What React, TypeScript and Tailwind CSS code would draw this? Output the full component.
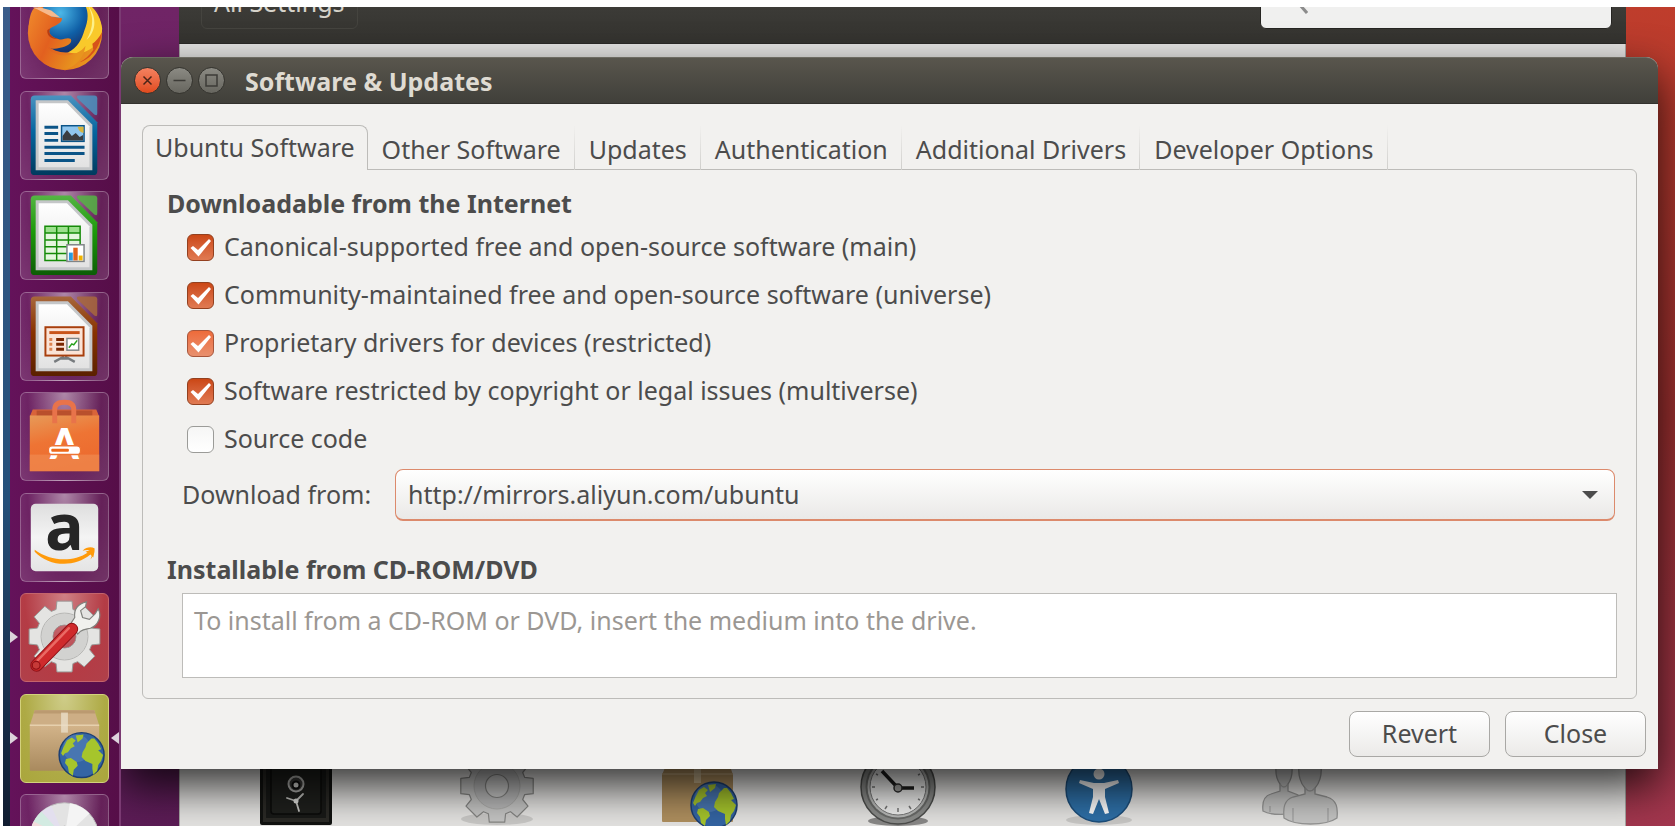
import { useState } from "react";
import type { ReactNode } from "react";

const tabs = [
  "Ubuntu Software",
  "Other Software",
  "Updates",
  "Authentication",
  "Additional Drivers",
  "Developer Options",
];

const sources = [
  { id: "main", label: "Canonical-supported free and open-source software (main)", state: "on" },
  { id: "universe", label: "Community-maintained free and open-source software (universe)", state: "on" },
  { id: "restricted", label: "Proprietary drivers for devices (restricted)", state: "mixed" },
  { id: "multiverse", label: "Software restricted by copyright or legal issues (multiverse)", state: "on" },
  { id: "source", label: "Source code", state: "off" },
];

function gearPath(cx: number, cy: number, outer: number, inner: number) {
  const points: string[] = [];
  for (let i = 0; i < 8; i++) {
    const a = (i * Math.PI) / 4;
    const corners = [
      [inner, -0.3],
      [outer, -0.21],
      [outer, 0.21],
      [inner, 0.3],
    ];
    corners.forEach(([r, d]) => {
      points.push(`${(cx + r * Math.cos(a + d)).toFixed(1)} ${(cy + r * Math.sin(a + d)).toFixed(1)}`);
    });
  }
  return `M${points.join("L")}Z`;
}

function Globe({ cx, cy }: { cx: number; cy: number }) {
  return (
    <g transform={`translate(${cx - 24} ${cy - 24})`}>
      <circle cx="24" cy="24" r="23" fill="#3465a4" stroke="#1c3f73" strokeWidth="1.5" />
      <circle cx="19" cy="17" r="14" fill="#6f97cb" opacity=".35" />
      <path
        d="M5 17L9 9L14 6L18 9L15 12L17 15L13 17L10 21L7 22L5 25L3 22ZM8 28L13 27L19 31L20 35L16 39L15 45L11 42L10 36L7 32ZM18 4L26 3L25 7L20 11ZM25 21L28 16L29 12L34 7L37 7L41 12L44 18L41 19L46 24L44 30L41 34L40 40L36 44L35 38L35 33L28 30L24 26Z"
        fill="#a6c52c"
      />
    </g>
  );
}

function FirefoxIcon() {
  return (
    <svg viewBox="0 0 89 89" className="h-full w-full" aria-hidden="true">
      <defs>
        <linearGradient id="fox" x1="0" y1="0" x2="1" y2="0.5">
          <stop offset="0" stopColor="#f08a2c" />
          <stop offset=".5" stopColor="#e2601f" />
          <stop offset="1" stopColor="#e8941e" />
        </linearGradient>
        <radialGradient id="foxGlobe" cx=".4" cy=".3" r=".7">
          <stop offset="0" stopColor="#4cb8e8" />
          <stop offset=".6" stopColor="#0f5fa6" />
          <stop offset="1" stopColor="#17306b" />
        </radialGradient>
      </defs>
      <circle cx="45" cy="43" r="38" fill="url(#fox)" />
      <circle cx="46" cy="34" r="29" fill="url(#foxGlobe)" />
      <path d="M63 10C70 20 69 30 65 40C62 50 58 58 48 63C68 67 83 54 83 38C81 24 74 15 63 10Z" fill="#f9c92b" />
      <path d="M68 14C75 26 74 38 67 50C76 42 79 28 68 14Z" fill="#fdf08a" />
      <path
        d="M8 34C9 25 11 20 14 17C22 17 26 20 31 26L42 28C42 33 36 35 30 38C27 43 31 47 38 49C43 51 46 47 51 49C53 53 47 57 40 58C34 60 30 59 27 57C34 70 58 68 66 56C64 72 50 81 42 80C22 79 6 62 8 34Z"
        fill="url(#fox)"
      />
      <path d="M12 17L17 19L31 26L40 27L31 20L20 17Z" fill="#f6b98c" />
      <path d="M30 38C27 43 31 47 38 49C32 50 26 46 27 40Z" fill="#b63d14" />
      <path d="M83 42C80 48 76 52 73 54L74 60C70 66 65 70 60 73C71 70 81 58 83 42Z" fill="#d6521a" />
    </svg>
  );
}

function OfficeDoc({ id, dark, mid, light, children }: { id: string; dark: string; mid: string; light: string; children: ReactNode }) {
  return (
    <svg viewBox="0 0 89 89" className="h-full w-full" aria-hidden="true">
      <defs>
        <linearGradient id={`${id}Edge`} x1="0" y1="0" x2="0" y2="1">
          <stop offset="0" stopColor={light} />
          <stop offset=".45" stopColor={mid} />
          <stop offset="1" stopColor={dark} />
        </linearGradient>
        <linearGradient id={`${id}Paper`} x1="0" y1="0" x2="0" y2="1">
          <stop offset="0" stopColor="#ffffff" />
          <stop offset="1" stopColor="#e2e2e2" />
        </linearGradient>
      </defs>
      <path d="M14 3.500H51L78 31V81Q78 85 74 85H14Q10 85 10 81V7.500Q10 3.500 14 3.500Z" fill={`url(#${id}Edge)`} />
      <path d="M59 3.500H75Q78 3.500 78 6.500V22Q78 25 75 23L58 7Q56 3.500 59 3.500Z" fill={light} opacity=".85" />
      <path d="M15 8.500H48L73 33.500V80H15Z" fill="#c4c6c8" />
      <path d="M18 11.500H47L70 35V77H18Z" fill={`url(#${id}Paper)`} />
      {children}
    </svg>
  );
}

function WriterIcon() {
  return (
    <OfficeDoc id="writer" dark="#003a5e" mid="#0566a0" light="#4b93c0">
      <path d="M24 36H38M24 42.500H38M24 49.500H38M24 56.500H65M24 63H65M24 70H55" stroke="#0b5487" strokeWidth="3" />
      <rect x="41.500" y="34.500" width="23" height="16" fill="#8fc6ee" stroke="#0b5487" strokeWidth="1.500" />
      <path d="M58 35.500H64V42Q59 41 58 35.500Z" fill="#d8b53c" />
      <path d="M42.500 49.500V45L47 39L52 45L56 42L60 46L63.500 44V49.500Z" fill="#3a3d40" />
    </OfficeDoc>
  );
}

function CalcIcon() {
  return (
    <OfficeDoc id="calc" dark="#0c5c06" mid="#1c9a0a" light="#55b544">
      <rect x="24.500" y="35" width="36" height="35" fill="#e4f6de" />
      <rect x="24.500" y="35" width="36" height="7" fill="#9be08c" />
      <path d="M24.500 35H60.500V70H24.500ZM24.500 42H60.500M24.500 49H60.500M24.500 56H60.500M24.500 63H60.500M36.500 35V70M48.500 35V70" fill="none" stroke="#158a08" strokeWidth="1.500" />
      <rect x="47" y="54" width="17.500" height="17" fill="#fff" stroke="#7f8487" strokeWidth="1.500" />
      <path d="M49 70V62H53V70Z" fill="#2a9bdc" />
      <path d="M53.500 70V57H58V70Z" fill="#e0631c" />
      <path d="M59 70V65H63V70Z" fill="#f0b400" />
    </OfficeDoc>
  );
}

function ImpressIcon() {
  return (
    <OfficeDoc id="impress" dark="#5a2000" mid="#883200" light="#a8683c">
      <path d="M44 65L34 70.500M45 65L55 70.500M41 67H48" stroke="#777b7e" strokeWidth="2.500" />
      <rect x="25" y="35" width="39" height="29" fill="#fbe3d6" stroke="#a83e0c" strokeWidth="2" />
      <path d="M29 40.500H60" stroke="#c9541a" strokeWidth="3" />
      <path d="M29 47.500H32M29 52.500H32M29 57.500H32" stroke="#dd8350" strokeWidth="3" />
      <path d="M36 47.500H44M36 52.500H44M36 57.500H44" stroke="#7a2600" strokeWidth="3" />
      <rect x="47" y="46.500" width="12" height="12" fill="#fff" stroke="#7f8487" strokeWidth="1.500" />
      <path d="M49 56L52 52L54 53L57.500 48.500" fill="none" stroke="#26a01b" strokeWidth="1.500" />
    </OfficeDoc>
  );
}

function SoftwareIcon() {
  return (
    <svg viewBox="0 0 89 89" className="h-full w-full" aria-hidden="true">
      <defs>
        <linearGradient id="bag" x1="0" y1="0" x2=".3" y2="1">
          <stop offset="0" stopColor="#e79a58" />
          <stop offset=".5" stopColor="#ee7434" />
          <stop offset="1" stopColor="#ec6a2e" />
        </linearGradient>
      </defs>
      <path d="M12 17H77L80 24H9Z" fill="#d9643a" />
      <path d="M16 18H73V24H16Z" fill="#b9502c" />
      <rect x="9" y="23" width="71" height="57" fill="url(#bag)" />
      <rect x="9" y="63" width="71" height="17" fill="#f08a50" opacity=".7" />
      <path d="M34.500 31V17Q34.500 9.500 44.500 9.500Q54 9.500 54 17V31" fill="none" stroke="#e8734a" strokeWidth="5" />
      <text x="44.500" y="68" textAnchor="middle" fontSize="42" fontWeight="900" fontFamily="Lato, sans-serif" fill="#fff">
        A
      </text>
      <rect x="28" y="54" width="33" height="9" rx="4" fill="#fff" stroke="#ee7434" strokeWidth="1.500" />
      <rect x="31" y="57" width="18" height="3" rx="1" fill="#ee6a1a" />
    </svg>
  );
}

function AmazonIcon() {
  return (
    <svg viewBox="0 0 89 89" className="h-full w-full overflow-visible" aria-hidden="true">
      <defs>
        <linearGradient id="amazonCard" x1="0" y1="0" x2="0" y2="1">
          <stop offset="0" stopColor="#dedede" />
          <stop offset=".5" stopColor="#f4f4f4" />
          <stop offset="1" stopColor="#e4e4e4" />
        </linearGradient>
      </defs>
      <rect x="10" y="10" width="69" height="69" rx="5" fill="url(#amazonCard)" />
      <text x="44.500" y="57" textAnchor="middle" fontSize="66" fontWeight="700" fontFamily="Open Sans, sans-serif" fill="#262626">
        a
      </text>
      <path d="M14 57C30 69 53 70 68 60L66 59L75 55.500L74 65L71 62C54 76 28 74 14 59Z" fill="#ff9a0a" />
      <path d="M63 58C67 54 72 54 75 55.500C76 60 74 64 71 67C73 63 73 60 72 58.500C70 57 67 57 63 58Z" fill="#ff9a0a" />
    </svg>
  );
}

function SettingsIcon() {
  return (
    <svg viewBox="0 0 89 89" className="h-full w-full" aria-hidden="true">
      <path
        d={`${gearPath(44.5, 43.5, 37, 29)}M44.500 31.500A12 12 0 1 0 44.500 55.500A12 12 0 1 0 44.500 31.500Z`}
        fill="#e4e4e2"
        stroke="#9a9a98"
        strokeWidth="1"
        strokeLinejoin="round"
        fillRule="evenodd"
      />
      <circle cx="44.500" cy="43.500" r="18" fill="none" stroke="#d2d2d0" strokeWidth="11" />
      <circle cx="44.500" cy="43.500" r="24" fill="none" stroke="#b4b4b2" strokeWidth="1" />
      <path d="M51 30L55 24C54 16 58 10 67 8L66 13L61 17L63 24L70 26L76 20L79 15C83 23 79 32 71 35C67 36 64 36 61 38L58 41Z" fill="#f1f1ee" stroke="#81827e" strokeWidth="1.200" />
      <path d="M16 73L52 36" stroke="#8f1116" strokeWidth="13" strokeLinecap="round" />
      <path d="M16 73L52 36" stroke="#cf2a2c" strokeWidth="11" strokeLinecap="round" />
      <path d="M17 68L49 35" stroke="#ea6a64" strokeWidth="2.500" strokeLinecap="round" />
      <circle cx="15.500" cy="73" r="4" fill="#c63a38" stroke="#8f1116" strokeWidth="1.200" />
    </svg>
  );
}

function PackageIcon() {
  return (
    <svg viewBox="0 0 89 89" className="h-full w-full" aria-hidden="true">
      <defs>
        <linearGradient id="box" x1="0" y1="0" x2="0" y2="1">
          <stop offset="0" stopColor="#d3b48a" />
          <stop offset="1" stopColor="#a98a5e" />
        </linearGradient>
      </defs>
      <path d="M14 15.500H75L80 31H9Z" fill="#cdae85" />
      <path d="M14 15.500H75L76 19H13Z" fill="#bb9a70" />
      <rect x="9" y="30.500" width="71" height="47" rx="1" fill="url(#box)" />
      <path d="M9 31H80" stroke="#e6d0ad" strokeWidth="1.500" />
      <path d="M41 18H48V38.500H41Z" fill="#ebe0cc" opacity=".75" />
      <Globe cx={62} cy={61.5} />
    </svg>
  );
}

function DiscIcon() {
  return (
    <svg viewBox="0 0 89 89" className="h-full w-full" aria-hidden="true">
      <circle cx="44.500" cy="43" r="35" fill="#e3e3e3" stroke="#bdbdbd" />
      <path d="M44.500 43L11 32A35 35 0 0 1 21 17Z" fill="#d3ebe2" />
      <path d="M44.500 43L9.500 40A35 35 0 0 1 13 27Z" fill="#f2dcdc" />
      <path d="M44.500 43L21 17A35 35 0 0 1 31 11Z" fill="#e3dfee" />
      <path d="M44.500 43L50 8.500A35 35 0 0 1 70 19Z" fill="#f4f4f4" />
      <circle cx="44.500" cy="43" r="11" fill="#d0d0d0" stroke="#9d9d9d" />
      <circle cx="44.500" cy="43" r="5" fill="#8a8a8a" />
    </svg>
  );
}

const glassTile =
  "bg-[radial-gradient(ellipse_at_50%_0%,rgba(255,255,255,0.5),rgba(255,255,255,0.08)_60%,rgba(255,255,255,0.16))] border-white/25";

const launcher = [
  { name: "Firefox Web Browser", icon: <FirefoxIcon />, tile: glassTile },
  { name: "LibreOffice Writer", icon: <WriterIcon />, tile: glassTile },
  { name: "LibreOffice Calc", icon: <CalcIcon />, tile: glassTile },
  { name: "LibreOffice Impress", icon: <ImpressIcon />, tile: glassTile },
  { name: "Ubuntu Software", icon: <SoftwareIcon />, tile: glassTile },
  { name: "Amazon", icon: <AmazonIcon />, tile: glassTile },
  {
    name: "System Settings",
    icon: <SettingsIcon />,
    tile: "bg-[radial-gradient(ellipse_at_50%_0%,#cf8085,#b43c45_65%,#b0404a)] border-[#c4646b]",
    running: true,
  },
  {
    name: "Software & Updates",
    icon: <PackageIcon />,
    tile: "bg-[radial-gradient(ellipse_at_50%_0%,#cfcd8a,#aeaa45_65%,#aaa63c)] border-[#d3d17c]",
    running: true,
    focused: true,
  },
  { name: "Disc", icon: <DiscIcon />, tile: glassTile },
];

function Launcher() {
  return (
    <nav aria-label="Launcher" className="relative z-20 w-[111px] shrink-0 overflow-hidden border-r-2 border-[#7a3a72] bg-linear-to-r from-[#64125a] to-[#560e48]">
      <div className="-mt-[17px] flex h-[893px] flex-col items-center justify-between">
        {launcher.map((app) => (
          <div key={app.name} className="relative flex w-full shrink-0 justify-center">
            {app.running && (
              <svg viewBox="0 0 8 12" className="absolute top-[38px] left-0 h-3 w-2" aria-hidden="true">
                <path d="M0 0L8 6L0 12Z" fill="#ddd3dc" />
              </svg>
            )}
            <button aria-label={app.name} className={`h-[89px] w-[89px] rounded-md border ${app.tile}`}>
              {app.icon}
            </button>
            {app.focused && (
              <svg viewBox="0 0 8 12" className="absolute top-[38px] right-0 h-3 w-2" aria-hidden="true">
                <path d="M8 0L0 6L8 12Z" fill="#ddd3dc" />
              </svg>
            )}
          </div>
        ))}
      </div>
    </nav>
  );
}

function SafeIcon() {
  return (
    <svg viewBox="0 0 80 80" className="h-20 w-20" aria-hidden="true">
      <rect x="4" y="4" width="72" height="75" rx="2" fill="#111210" />
      <rect x="7" y="7" width="66" height="69" fill="#2b2a26" />
      <rect x="10" y="8" width="60" height="64" fill="#181917" />
      <rect x="15" y="10" width="50" height="58" rx="3" fill="#1f201d" stroke="#0b0b0a" strokeWidth="1.500" />
      <circle cx="40" cy="38" r="7.500" fill="#3a3a38" stroke="#b4b4b1" strokeWidth="2" />
      <circle cx="40" cy="39" r="3.500" fill="#d7d7d4" stroke="#0c0c0c" strokeWidth="2" />
      <path d="M40 55L31 52M40 55L47 48M40 55L43 65" stroke="#c6c6c2" strokeWidth="1.800" strokeLinecap="round" />
      <circle cx="40" cy="55" r="2.500" fill="#e0e0dc" />
    </svg>
  );
}

function GearIcon() {
  return (
    <svg viewBox="0 0 80 80" className="h-20 w-20" aria-hidden="true">
      <ellipse cx="40" cy="73" rx="36" ry="6" fill="#000" opacity=".12" />
      <path d={gearPath(40, 40, 37, 29)} fill="#c6c6c5" stroke="#858583" strokeWidth="1.200" strokeLinejoin="round" />
      <circle cx="40" cy="40" r="23" fill="#bababa" stroke="#acacaa" />
      <circle cx="40" cy="40" r="11.500" fill="#cbcbca" stroke="#858583" strokeWidth="1.200" />
    </svg>
  );
}

function BoxIcon() {
  return (
    <svg viewBox="0 0 80 80" className="h-20 w-20" aria-hidden="true">
      <path d="M10 14H70L75 29H4Z" fill="#b39362" />
      <rect x="4" y="28" width="71" height="48" rx="1" fill="#b0905f" />
      <path d="M4 28H75" stroke="#cdb084" strokeWidth="1.500" />
      <path d="M36 16H43V37H36Z" fill="#ddcba8" opacity=".7" />
      <Globe cx={56} cy={59} />
    </svg>
  );
}

function ClockIcon() {
  return (
    <svg viewBox="0 0 80 80" className="h-20 w-20" aria-hidden="true">
      <ellipse cx="40" cy="75" rx="30" ry="5" fill="#000" opacity=".4" />
      <circle cx="40" cy="41" r="37" fill="#8c8d8b" stroke="#4d4e4c" strokeWidth="1.500" />
      <circle cx="40" cy="41" r="32.500" fill="#6a6b69" />
      <circle cx="40" cy="41" r="30.500" fill="#b9bab8" />
      <circle cx="40" cy="41" r="28" fill="#f0f0ef" stroke="#777" />
      <path d="M40 66V62M14 41H17M63 41H66M27 63L29 60M53 63L51 60M18 54L20 53M62 54L60 53M18 28L20 29M62 28L60 29" stroke="#777" strokeWidth="1.500" />
      <path d="M40 42L24 25M40 42L56 42" stroke="#1d1d1d" strokeWidth="3.500" />
      <circle cx="40" cy="42" r="4" fill="#a5a5a3" stroke="#2d2d2d" strokeWidth="1.500" />
    </svg>
  );
}

function AccessIcon() {
  return (
    <svg viewBox="0 0 80 80" className="h-20 w-20" aria-hidden="true">
      <ellipse cx="40" cy="74" rx="33" ry="5" fill="#000" opacity=".12" />
      <circle cx="40" cy="43" r="33" fill="#2e70a8" stroke="#1d4f7c" strokeWidth="1.500" />
      <circle cx="40" cy="28" r="5.500" fill="#fff" />
      <path d="M21 34L35 37H45L59 34L60 37L46 43L46 51L50 67L46 68L40 53L34 68L30 67L34 51L34 43L20 37Z" fill="#fff" />
    </svg>
  );
}

function UsersIcon() {
  return (
    <svg viewBox="0 0 80 80" className="h-20 w-20" aria-hidden="true">
      <g fill="#c6c6c5" stroke="#969695" strokeWidth="1.300">
        <path d="M3 65C2 57 4 50 11 48L20 45V38C14 30 14 10 24 10C34 10 34 30 28 38V45L38 49V67C24 69 10 69 3 65Z" />
        <path d="M24 72C23 62 24 54 33 51L45 48V42C36 33 36 8 50 8C64 8 64 33 55 42V48L67 51C77 54 78 62 77 72C66 80 35 80 24 72Z" />
      </g>
      <path d="M20 38Q24 44 28 38M45 42Q50 48 55 42M33 62V76M68 62V76M10 60V66" fill="none" stroke="#a3a3a2" strokeWidth="1.300" />
    </svg>
  );
}

const settingsItems = [
  { name: "Security & Privacy", icon: <SafeIcon /> },
  { name: "Details", icon: <GearIcon /> },
  { name: "Software & Updates", icon: <BoxIcon /> },
  { name: "Time & Date", icon: <ClockIcon /> },
  { name: "Universal Access", icon: <AccessIcon /> },
  { name: "User Accounts", icon: <UsersIcon /> },
];

function SettingsWindow() {
  return (
    <section aria-label="System Settings" className="absolute inset-y-0 right-[49px] left-[58px] flex flex-col bg-[#e6e5e3]">
      <header className="flex h-[37px] shrink-0 items-end justify-between overflow-hidden border-b border-[#2b2a27] bg-linear-to-b from-[#3c3b37] to-[#34332f] pr-[14px] pb-[14px] pl-[22px]">
        <button className="h-[54px] shrink-0 rounded-md border border-[#45443f] px-3 text-[25px] leading-[46px] text-[#d6d3ca]">
          All Settings
        </button>
        <div className="relative">
          <input aria-label="Search" type="search" className="block h-11 w-[352px] rounded-md border border-[#262522] bg-[#f0f0ef] px-10" />
          <svg viewBox="0 0 24 24" className="absolute top-1.5 left-6 h-6 w-6" aria-hidden="true">
            <circle cx="10" cy="7" r="7" fill="none" stroke="#8b8b8b" strokeWidth="2" />
            <path d="M16 14L23 22" stroke="#8b8b8b" strokeWidth="3" />
          </svg>
        </div>
      </header>
      <div className="flex flex-1 flex-col justify-end border-x border-[#a9a8a5]">
        <div className="grid grid-cols-7 pr-6 pl-4">
          {settingsItems.map((item) => (
            <button key={item.name} aria-label={item.name} className="flex justify-center">
              {item.icon}
            </button>
          ))}
        </div>
      </div>
    </section>
  );
}

function TitleBar() {
  return (
    <header className="flex h-[47px] items-center rounded-t-xl border-t border-b border-t-[#6d6b62] border-b-[#33322e] bg-linear-to-b from-[#59564d] to-[#403f3a] px-[13px]">
      <div className="flex gap-[5px]">
        <button aria-label="Close window" className="h-[27px] w-[27px] rounded-full border border-[#35342f] bg-linear-to-b from-[#f4815f] to-[#e04a1c]">
          <svg viewBox="0 0 25 25" aria-hidden="true">
            <path d="M8.500 8.500L16.500 16.500M16.500 8.500L8.500 16.500" stroke="#4a2418" strokeWidth="1.500" />
          </svg>
        </button>
        <button aria-label="Minimize window" className="h-[27px] w-[27px] rounded-full border border-[#35342f] bg-linear-to-b from-[#8b8a83] to-[#67665f]">
          <svg viewBox="0 0 25 25" aria-hidden="true">
            <path d="M6.500 12.500H18.500" stroke="#3c3b37" strokeWidth="1.500" />
          </svg>
        </button>
        <button aria-label="Maximize window" className="h-[27px] w-[27px] rounded-full border border-[#35342f] bg-linear-to-b from-[#8b8a83] to-[#67665f]">
          <svg viewBox="0 0 25 25" aria-hidden="true">
            <rect x="7" y="7" width="11" height="11" fill="none" stroke="#3c3b37" strokeWidth="1.500" />
          </svg>
        </button>
      </div>
      <h1 className="ml-5 text-[25px] leading-8 font-bold text-[#dfdbd2]">Software &amp; Updates</h1>
    </header>
  );
}

function SourceRow({ id, label, state }: { id: string; label: string; state: string }) {
  const [checked, setChecked] = useState(state !== "off");
  const fill =
    state === "mixed"
      ? "checked:border-[#a8553a] checked:from-[#ee6b3a] checked:to-[#e8906e]"
      : "checked:border-[#93401f] checked:from-[#cb4714] checked:to-[#e07a52]";
  return (
    <div className="flex h-12 items-center">
      <span className="relative h-[27px] w-[27px]">
        <input
          id={id}
          type="checkbox"
          checked={checked}
          onChange={() => setChecked(!checked)}
          className={`peer block h-[27px] w-[27px] appearance-none rounded-md border border-[#9b9b98] bg-linear-to-b from-[#f6f6f5] to-white ${fill}`}
        />
        <svg viewBox="0 0 27 27" className="pointer-events-none absolute inset-0 hidden h-full w-full peer-checked:block" aria-hidden="true">
          <path d="M3.500 14L6 12L11 16L22 5L24 7L11.500 22.500Z" fill="#fff" />
        </svg>
      </span>
      <label htmlFor={id} className="pl-2.5">
        {label}
      </label>
    </div>
  );
}

export default function App() {
  const [tab, setTab] = useState(tabs[0]);

  return (
    <div className="h-screen bg-white px-[3px] pt-[7px] pb-[6px] font-['Noto_Sans',sans-serif] text-[25px] text-[#4c4c4c]">
      <div className="flex h-full overflow-hidden">
        <div className="w-[7px] shrink-0 bg-linear-to-b from-[#3a5c8a] via-[#24507a] via-60% to-[#101c30]" />
        <Launcher />
        <main className="relative min-w-0 flex-1 bg-linear-to-b from-[#702466] to-[#5c1c56]">
          <div className="absolute inset-y-0 right-0 w-[49px] bg-linear-to-b from-[#bf3d2c] via-[#9e3030] via-50% to-[#a2364e]" />
          <SettingsWindow />
          <div className="relative mt-[50px] mr-[17px] rounded-t-xl bg-[#f2f1ef] shadow-[0_18px_45px_rgba(0,0,0,0.8)]">
            <TitleBar />
            <div className="pt-[21px] pr-[21px] pl-[21px]">
              <div role="tablist" className="flex h-[45px] items-stretch">
                {tabs.map((name) => (
                  <button
                    key={name}
                    role="tab"
                    aria-selected={tab === name}
                    onClick={() => setTab(name)}
                    className={
                      tab === name
                        ? "relative z-10 rounded-t-lg border border-b-0 border-[#bdbcb9] bg-[#f2f1ef] px-3 whitespace-nowrap"
                        : "bg-[linear-gradient(to_bottom,transparent,#cfcecb)] bg-[length:1px_100%] bg-right bg-no-repeat px-3.5 pt-1 whitespace-nowrap"
                    }
                  >
                    {name}
                  </button>
                ))}
              </div>
              <div role="tabpanel" aria-label={tab} className="-mt-px rounded-md rounded-tl-none border border-[#bdbcb9] pr-[21px] pb-5 pl-6">
                <h2 className="pt-[17px] leading-8 font-bold">Downloadable from the Internet</h2>
                <div className="mt-1 pl-5">
                  {sources.map((source) => (
                    <SourceRow key={source.id} {...source} />
                  ))}
                </div>
                <div className="mt-1.5 flex items-center pl-[15px]">
                  <label htmlFor="server" className="w-[213px] shrink-0">
                    Download from:
                  </label>
                  <div className="relative flex-1">
                    <select
                      id="server"
                      className="block h-[52px] w-full appearance-none rounded-lg border border-b-2 border-[#dc8a6c] bg-linear-to-b from-white to-[#eae9e7] px-3"
                    >
                      <option>http://mirrors.aliyun.com/ubuntu</option>
                    </select>
                    <svg viewBox="0 0 16 8" className="pointer-events-none absolute top-[22px] right-[17px] h-2 w-4" aria-hidden="true">
                      <path d="M0 0H16L8 8Z" fill="#4c4c4c" />
                    </svg>
                  </div>
                </div>
                <h2 className="mt-8 leading-8 font-bold">Installable from CD-ROM/DVD</h2>
                <div className="mt-2 ml-[15px] -mr-0.5 h-[85px] border border-[#bdbcb9] bg-white px-[11px] pt-2.5 text-[#9b9793]">
                  <p className="leading-8">To install from a CD-ROM or DVD, insert the medium into the drive.</p>
                </div>
              </div>
            </div>
            <div className="flex justify-end gap-[15px] px-3 py-3">
              <button className="h-[46px] w-[141px] rounded-lg border border-[#a9a8a5] bg-linear-to-b from-white to-[#ebeae8]">
                Revert
              </button>
              <button className="h-[46px] w-[141px] rounded-lg border border-[#a9a8a5] bg-linear-to-b from-white to-[#ebeae8]">
                Close
              </button>
            </div>
          </div>
        </main>
      </div>
    </div>
  );
}
